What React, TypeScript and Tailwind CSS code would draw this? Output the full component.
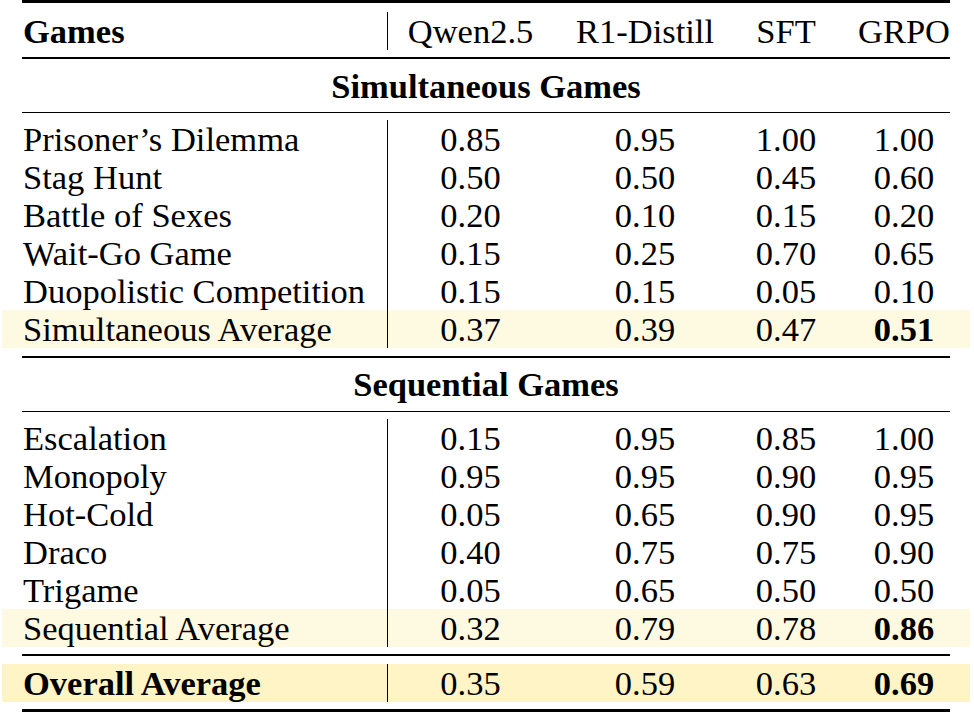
import clsx from "clsx";

type Row = {
  name: string;
  values: string[];
  best?: number;
};

const SIMULTANEOUS: Row[] = [
  { name: "Prisoner’s Dilemma", values: ["0.85", "0.95", "1.00", "1.00"] },
  { name: "Stag Hunt", values: ["0.50", "0.50", "0.45", "0.60"] },
  { name: "Battle of Sexes", values: ["0.20", "0.10", "0.15", "0.20"] },
  { name: "Wait-Go Game", values: ["0.15", "0.25", "0.70", "0.65"] },
  { name: "Duopolistic Competition", values: ["0.15", "0.15", "0.05", "0.10"] },
];

const SEQUENTIAL: Row[] = [
  { name: "Escalation", values: ["0.15", "0.95", "0.85", "1.00"] },
  { name: "Monopoly", values: ["0.95", "0.95", "0.90", "0.95"] },
  { name: "Hot-Cold", values: ["0.05", "0.65", "0.90", "0.95"] },
  { name: "Draco", values: ["0.40", "0.75", "0.75", "0.90"] },
  { name: "Trigame", values: ["0.05", "0.65", "0.50", "0.50"] },
];

const COLS = ["w-[166px] border-l border-black", "w-[184px]", "w-[98px]", "w-[135px] pl-[3px]"];

function TableRow({
  name,
  values,
  best,
  boldName,
  bg,
}: Row & { boldName?: boolean; bg?: string }) {
  return (
    <div className={clsx("ml-[2px] mr-[4px] flex h-[38px] pl-[20px]", bg)}>
      <div className={clsx("w-[365px] pl-px whitespace-nowrap", boldName && "font-bold")}>
        {name}
      </div>
      {values.map((v, i) => (
        <div key={i} className={clsx("text-center", COLS[i], best === i && "font-bold")}>
          {v}
        </div>
      ))}
    </div>
  );
}

function Rule({ thick, className }: { thick?: boolean; className?: string }) {
  return (
    <div
      className={clsx(
        "ml-[22px] w-[928px] bg-black",
        thick ? "h-[3px]" : "h-[1.5px]",
        className,
      )}
    />
  );
}

function SectionTitle({ children, className }: { children: string; className?: string }) {
  return (
    <div className={clsx("ml-[22px] h-[38px] w-[928px] text-center font-bold", className)}>
      {children}
    </div>
  );
}

export default function App() {
  return (
    <div className="h-[717px] w-[974px] overflow-hidden bg-white font-['Liberation_Serif',serif] text-[34.5px] leading-[38px] text-black">
      <Rule thick />
      <div className="mt-[9px]">
        <TableRow name="Games" boldName values={["Qwen2.5", "R1-Distill", "SFT", "GRPO"]} />
      </div>
      <Rule className="mt-[7px]" />
      <SectionTitle className="mt-[8px]">Simultaneous Games</SectionTitle>
      <Rule className="mt-[7px]" />

      <div className="mt-[7px]">
        {SIMULTANEOUS.map((r) => (
          <TableRow key={r.name} {...r} />
        ))}
        <TableRow
          name="Simultaneous Average"
          values={["0.37", "0.39", "0.47", "0.51"]}
          best={3}
          bg="bg-[#fef9e1]"
        />
      </div>

      <Rule className="mt-[8px]" />
      <SectionTitle className="mt-[7px]">Sequential Games</SectionTitle>
      <Rule className="mt-[8px]" />

      <div className="mt-[7px]">
        {SEQUENTIAL.map((r) => (
          <TableRow key={r.name} {...r} />
        ))}
        <TableRow
          name="Sequential Average"
          values={["0.32", "0.79", "0.78", "0.86"]}
          best={3}
          bg="bg-[#fef9e1]"
        />
      </div>

      <Rule className="mt-[7px]" />
      <div className="mt-[8px]">
        <TableRow
          name="Overall Average"
          boldName
          values={["0.35", "0.59", "0.63", "0.69"]}
          best={3}
          bg="bg-[#fef4c6]"
        />
      </div>
      <Rule thick className="mt-[7px]" />
    </div>
  );
}
